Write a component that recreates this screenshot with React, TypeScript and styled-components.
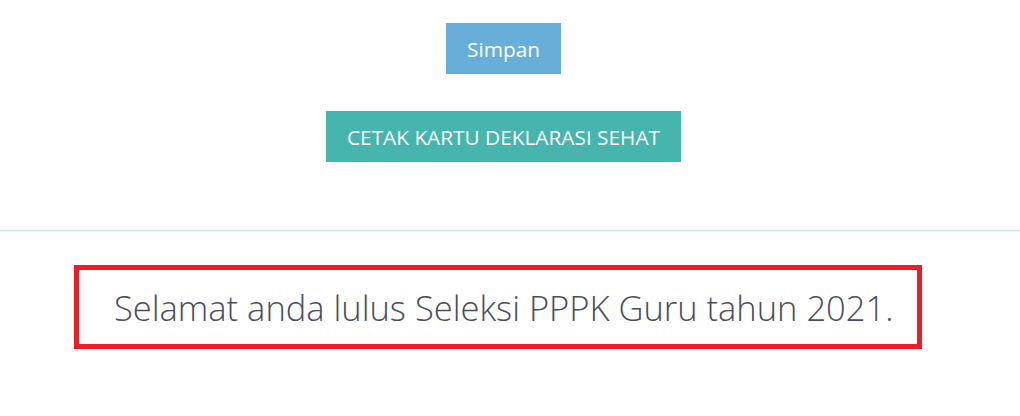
import React from "react";
import styled, { createGlobalStyle } from "styled-components";

const GlobalStyle = createGlobalStyle`
  html, body {
    margin: 0;
    padding: 0;
    background: #ffffff;
    font-family: "Open Sans", "Liberation Sans", sans-serif;
  }
`;

const Page = styled.div`
  width: 1020px;
  height: 416px;
  box-sizing: border-box;
  padding-top: 23px;
  display: flex;
  flex-direction: column;
`;

const ButtonRow = styled.div<{ $gap: number }>`
  display: flex;
  justify-content: center;
  padding-right: 13px;
  margin-bottom: ${p => p.$gap}px;
`;

const Button = styled.button<{ $color: string; $upper?: boolean }>`
  height: 51px;
  padding: 0 21px;
  border: none;
  border-radius: 0;
  background: ${p => p.$color};
  color: #ffffff;
  font-family: "Open Sans", "Liberation Sans", sans-serif;
  font-size: 20.8px;
  font-weight: 400;
  text-transform: ${p => (p.$upper ? "uppercase" : "none")};
  cursor: pointer;
`;

const Divider = styled.hr`
  width: 100%;
  margin: 0;
  border: none;
  border-top: 1px solid #b8ecf2;
`;

const Notice = styled.div`
  margin: 34px 0 0 74px;
  width: 848px;
  height: 84px;
  box-sizing: border-box;
  border: 5px solid #ee1d25;
  display: flex;
  align-items: center;
  padding-left: 35px;
  white-space: nowrap;
  color: #474d60;
  font-size: 34.5px;
  font-weight: 300;
`;

const App = () => {
  return (
    <>
      <GlobalStyle />
      <Page>
        <ButtonRow $gap={37}>
          <Button $color="#67aed9">Simpan</Button>
        </ButtonRow>
        <ButtonRow $gap={68}>
          <Button $color="#45b5ae" $upper>
            Cetak Kartu Deklarasi Sehat
          </Button>
        </ButtonRow>
        <Divider />
        <Notice>Selamat anda lulus Seleksi PPPK Guru tahun 2021.</Notice>
      </Page>
    </>
  );
};

export default App;
